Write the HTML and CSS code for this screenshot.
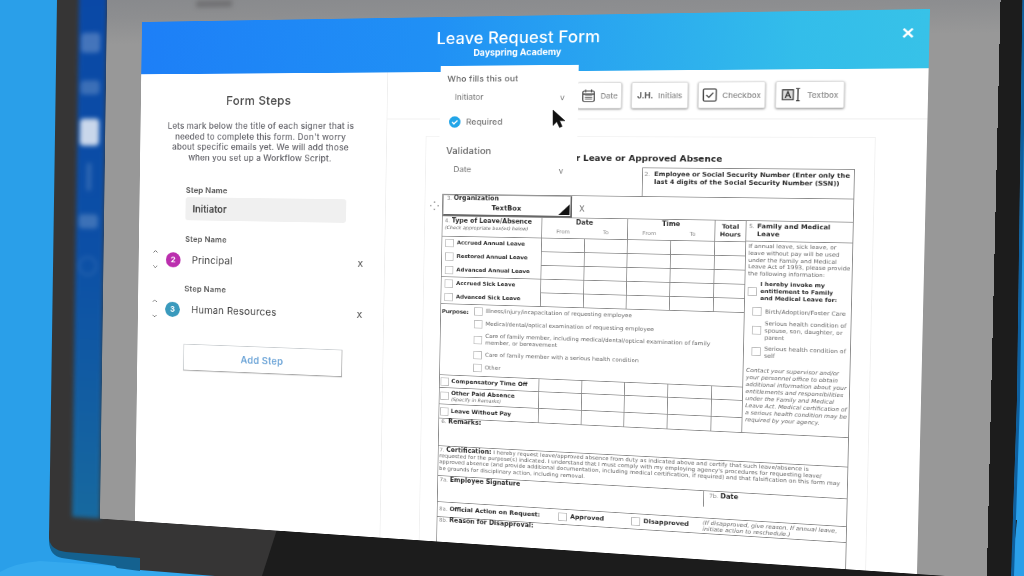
FILE: index.html
```html
<!DOCTYPE html>
<html lang="en">
<head>
<meta charset="utf-8">
<title>Leave Request Form</title>
<link rel="stylesheet" href="styles.css">
</head>
<body>
<div class="stage">
  <svg class="device" viewBox="0 0 1024 576" aria-hidden="true">
    <path class="base" d="M0 576 L0 572 Q15 563 40 561 L115 566 L140 570 L215 576Z"/>
    <path class="edge" d="M49 530 L49 542 Q50 556 62 558 L115 566 L117 568 L140 571 L140 555 L60 550Z"/>
    <path class="lid" d="M57 0 L1022.500 0 L1017 400 L1011 576 L215 576 L140 570 L140 558 L66 552 Q50 550 49 538Z"/>
    <path class="lid-dark" d="M280 520 L1017 520 L1011 576 L262 576Z"/>
    <path class="lid-dark" d="M960 0 L1022.500 0 L1017 400 L1011 576 L940 576Z"/>
    <path class="side" d="M1022.500 0 L1026 0 L1020 400 L1014 576 L1011 576 L1017 400Z"/>
  </svg>

  <div class="screen">
    <nav class="rail">
      <span class="rail-icon rail-square"></span>
      <span class="rail-icon rail-box"></span>
      <span class="rail-icon rail-doc"></span>
      <span class="rail-icon rail-thin"></span>
      <span class="rail-icon rail-box"></span>
      <span class="rail-icon rail-ring"></span>
    </nav>
    <div class="backdrop">
      <div class="ghost-title"></div>
      <section class="modal">
        <header class="modal-head">
          <h1>Leave Request Form</h1>
          <p>Dayspring Academy</p>
          <span class="close">✕</span>
        </header>
        <div class="modal-body">
          <aside class="steps">
            <h2>Form Steps</h2>
            <p class="intro">Lets mark below the title of each signer that is<br>needed to complete this form. Don't worry<br>about specific emails yet. We will add those<br>when you set up a Workflow Script.</p>
            <div class="step step-first">
              <label>Step Name</label>
              <div class="step-input">Initiator</div>
            </div>
            <div class="step">
              <label>Step Name</label>
              <div class="step-row">
                <span class="sorter">
                  <svg viewBox="0 0 8 5"><path d="M1 4l3-3 3 3" fill="none" stroke="#666" stroke-width="1"/></svg>
                  <svg viewBox="0 0 8 5"><path d="M1 1l3 3 3-3" fill="none" stroke="#666" stroke-width="1"/></svg>
                </span>
                <span class="badge badge-pink">2</span>
                <span class="step-name">Principal</span>
                <span class="step-x">x</span>
              </div>
            </div>
            <div class="step">
              <label>Step Name</label>
              <div class="step-row">
                <span class="sorter">
                  <svg viewBox="0 0 8 5"><path d="M1 4l3-3 3 3" fill="none" stroke="#666" stroke-width="1"/></svg>
                  <svg viewBox="0 0 8 5"><path d="M1 1l3 3 3-3" fill="none" stroke="#666" stroke-width="1"/></svg>
                </span>
                <span class="badge badge-teal">3</span>
                <span class="step-name">Human Resources</span>
                <span class="step-x">x</span>
              </div>
            </div>
            <button class="add-step">Add Step</button>
          </aside>

          <main class="editor">
            <div class="toolbar">
              <div class="tool tool-date">
                <svg viewBox="0 0 20 20" class="tool-icon"><rect x="2" y="3.500" width="16" height="15" rx="2" fill="none" stroke="#555" stroke-width="1.600"/><path d="M2 8h16" stroke="#555" stroke-width="2"/><path d="M6 1.500v4M14 1.500v4" stroke="#555" stroke-width="1.600"/><path d="M5 10.500h10M5 13h10M5 15.500h10" stroke="#777" stroke-width="1.400"/></svg>
                <span>Date</span>
              </div>
              <div class="tool tool-initials"><b>J.H.</b><span>Initials</span></div>
              <div class="tool tool-check">
                <svg viewBox="0 0 20 20" class="tool-icon"><rect x="1.500" y="1.500" width="17" height="17" rx="1.500" fill="none" stroke="#444" stroke-width="1.700"/><path d="M5.500 10l3.300 3.200 6-6.500" fill="none" stroke="#444" stroke-width="1.700"/></svg>
                <span>Checkbox</span>
              </div>
              <div class="tool tool-text">
                <svg viewBox="0 0 26 20" class="tool-wide"><rect x="1" y="3" width="14" height="14" fill="#ddd" stroke="#444" stroke-width="1.600"/><path d="M4.500 14.500L8 5.500l3.500 9M5.800 11.500h4.400" fill="none" stroke="#333" stroke-width="1.600"/><path d="M21 1.500v17M18.500 1.500h5M18.500 18.500h5" stroke="#333" stroke-width="1.600" fill="none"/></svg>
                <span>Textbox</span>
              </div>
            </div>

            <div class="doc-area">
              <article class="doc">
                <div class="doc-title">Application for Leave or Approved Absence</div>
                <div class="form">
                  <div class="f-top">
                    <div class="f-box1"></div>
                    <div class="f-box2"><span class="num">2.</span><b>Employee or Social Security Number (Enter only the<br>last 4 digits of the Social Security Number (SSN))</b></div>
                  </div>
                  <div class="f-org">
                    <div class="textbox">
                      <span class="org-label"><span class="num">3.</span> <b>Organization</b></span>
                      <b class="textbox-value">TextBox</b>
                      <span class="corner"></span>
                    </div>
                    <span class="org-x">X</span>
                    <svg class="drag" viewBox="0 0 16 16"><path d="M8 1l1.500 2h-3zM8 15l-1.500-2h3zM1 8l2-1.500v3zM15 8l-2 1.500v-3z" fill="#555"/></svg>
                  </div>
                  <div class="f-mid">
                    <div class="f-main">
                      <div class="th th-type"><span><span class="num">4.</span> <b>Type of Leave/Absence</b></span><em>(Check appropriate box(es) below)</em></div>
                      <div class="th th-span"><b>Date</b><span class="pair"><span>From</span><span>To</span></span></div>
                      <div class="th th-span"><b>Time</b><span class="pair"><span>From</span><span>To</span></span></div>
                      <div class="th th-total"><b>Total<br>Hours</b></div>

                      <div class="leave leave-sep"><i class="box"></i><b>Accrued Annual Leave</b></div>
                      <div class="cell"></div><div class="cell"></div><div class="cell"></div><div class="cell"></div><div class="cell"></div>
                      <div class="leave"><i class="box"></i><b>Restored Annual Leave</b></div>
                      <div class="cell"></div><div class="cell"></div><div class="cell"></div><div class="cell"></div><div class="cell"></div>
                      <div class="leave"><i class="box"></i><b>Advanced Annual Leave</b></div>
                      <div class="cell"></div><div class="cell"></div><div class="cell"></div><div class="cell"></div><div class="cell"></div>
                      <div class="leave leave-sep"><i class="box"></i><b>Accrued Sick Leave</b></div>
                      <div class="cell"></div><div class="cell"></div><div class="cell"></div><div class="cell"></div><div class="cell"></div>
                      <div class="leave"><i class="box"></i><b>Advanced Sick Leave</b></div>
                      <div class="cell"></div><div class="cell"></div><div class="cell"></div><div class="cell"></div><div class="cell"></div>

                      <div class="purpose">
                        <b class="purpose-label">Purpose:</b>
                        <ul>
                          <li><i class="box"></i><span>Illness/injury/incapacitation of requesting employee</span></li>
                          <li><i class="box"></i><span>Medical/dental/optical examination of requesting employee</span></li>
                          <li class="li-tall"><i class="box"></i><span>Care of family member, including medical/dental/optical examination of family<br>member, or bereavement</span></li>
                          <li><i class="box"></i><span>Care of family member with a serious health condition</span></li>
                          <li><i class="box"></i><span>Other</span></li>
                        </ul>
                      </div>

                      <div class="leave leave-sep row-low"><i class="box"></i><b>Compensatory Time Off</b></div>
                      <div class="cell"></div><div class="cell"></div><div class="cell"></div><div class="cell"></div><div class="cell"></div>
                      <div class="leave leave-sep row-low"><i class="box"></i><span class="two"><b>Other Paid Absence</b><em>(Specify in Remarks)</em></span></div>
                      <div class="cell"></div><div class="cell"></div><div class="cell"></div><div class="cell"></div><div class="cell"></div>
                      <div class="leave leave-sep row-low"><i class="box"></i><b>Leave Without Pay</b></div>
                      <div class="cell"></div><div class="cell"></div><div class="cell"></div><div class="cell"></div><div class="cell"></div>
                    </div>
                    <div class="f-family">
                      <div class="fam-head"><span class="num">5.</span> <b>Family and Medical<br>Leave</b></div>
                      <div class="fam-body">
                        <p>If annual leave, sick leave, or<br>leave without pay will be used<br>under the Family and Medical<br>Leave Act of 1993, please provide<br>the following information:</p>
                        <div class="fam-opt fam-strong"><i class="box"></i><b>I hereby invoke my<br>entitlement to Family<br>and Medical Leave for:</b></div>
                        <div class="fam-opt"><i class="box"></i><span>Birth/Adoption/Foster Care</span></div>
                        <div class="fam-opt"><i class="box"></i><span>Serious health condition of<br>spouse, son, daughter, or<br>parent</span></div>
                        <div class="fam-opt"><i class="box"></i><span>Serious health condition of<br>self</span></div>
                        <p class="fam-note">Contact your supervisor and/or<br>your personnel office to obtain<br>additional information about your<br>entitlements and responsibilities<br>under the Family and Medical<br>Leave Act.  Medical certification of<br>a serious health condition may be<br>required by your agency.</p>
                      </div>
                    </div>
                  </div>
                  <div class="f-remarks"><span class="num">6.</span> <b class="big">Remarks:</b></div>
                  <div class="f-cert"><span class="num">7.</span> <b class="big">Certification:</b> I hereby request leave/approved absence from duty as indicated above and certify that such leave/absence is<br>requested for the purpose(s) indicated. I understand that I must comply with my employing agency's procedures for requesting leave/<br>approved absence (and provide additional documentation, including medical certification, if required) and that falsification on this form may<br>be grounds for disciplinary action, including removal.</div>
                  <div class="f-sign">
                    <div class="sign-a"><span class="num">7a.</span> <b class="big">Employee Signature</b></div>
                    <div class="sign-b"><span class="num">7b.</span> <b class="big">Date</b></div>
                  </div>
                  <div class="f-action">
                    <span class="act-a"><span class="num">8a.</span> <b>Official Action on Request:</b></span>
                    <span class="act-b"><i class="box"></i><b>Approved</b></span>
                    <span class="act-c"><i class="box"></i><b>Disapproved</b></span>
                    <em class="act-d">(If disapproved, give reason. If annual leave,<br>initiate action to reschedule.)</em>
                  </div>
                  <div class="f-reason"><span class="num">8b.</span> <b>Reason for Disapproval:</b></div>
                </div>
              </article>
            </div>
          </main>
        </div>

        <div class="popup">
          <div class="pop-label">Who fills this out</div>
          <div class="pop-select pop-first"><span>Initiator</span><span class="caret">v</span></div>
          <div class="pop-required">
            <svg viewBox="0 0 16 16" class="pop-check"><circle cx="8" cy="8" r="8" fill="#22a5e8"/><path d="M4.300 8.200l2.600 2.500 4.800-5" fill="none" stroke="#fff" stroke-width="1.800"/></svg>
            <span>Required</span>
          </div>
          <div class="pop-label pop-validation">Validation</div>
          <div class="pop-select pop-date"><span>Date</span><span class="caret">v</span></div>
        </div>
      </section>
    </div>
  </div>

  <svg class="cursor" viewBox="0 0 14 20" aria-hidden="true"><path d="M1 1 L1 16.500 L4.800 12.800 L7.500 18.600 L10.200 17.400 L7.700 11.800 L13 11.800Z" fill="#111" stroke="#222" stroke-width=".5"/></svg>
</div>
</body>
</html>
```
FILE: styles.css
```css
* { box-sizing: border-box; }
html, body { margin: 0; padding: 0; height: 100%; overflow: hidden; }
body { background: #2a9fe9; font-family: "Inter", "Liberation Sans", sans-serif; }
.stage { position: relative; width: 1024px; height: 576px; overflow: hidden; }

.device { position: absolute; inset: 0; width: 1024px; height: 576px; }
.base { fill: #35a9ee; }
.edge { fill: #14618f; }
.lid { fill: #363535; }
.lid-dark { fill: #1c1c1c; }
.side { fill: #0e5f9e; }

.cursor { position: absolute; left: 552px; top: 109px; width: 14px; height: 20px; filter: blur(.4px); }

/* the flat page, projected on to the laptop's screen */
.screen {
  position: absolute; left: 0; top: 0;
  width: 1170px; height: 760px;
  display: flex;
  transform-origin: 0 0;
  transform: matrix3d(0.678864,-0.014056,0,-0.000117351, -0.008896,0.717116,0,0.00000817, 0,0,1,0, 142,22,0,1) translate(-92px,-60px);
}

.rail {
  width: 41px; flex: none;
  background: linear-gradient(180deg, #0a48a6 0%, #0c4fa6 50%, #17699f 100%);
  display: grid; grid-auto-rows: 63px; align-items: center; justify-items: center;
  padding: 56px 5px 0 0;
  filter: blur(3px);
}
.rail-icon { display: block; width: 28px; height: 28px; background: rgba(255,255,255,.24); border-radius: 5px; }
.rail-box { height: 20px; background: rgba(255,255,255,.2); }
.rail-doc { width: 28px; height: 38px; background: rgba(255,255,255,.78); }
.rail-thin { width: 8px; height: 40px; background: rgba(255,255,255,.13); }
.rail-ring { border-radius: 50%; background: none; border: 3px solid rgba(255,255,255,.1); }

.backdrop {
  position: relative; flex: 1;
  padding: 60px 78px 0 51px;
  background: linear-gradient(180deg, #838589 0%, #8d8e90 7%, #989898 12%, #989898 100%);
}
.ghost-title { position: absolute; left: 128px; top: 32px; width: 50px; height: 9px; background: #707072; filter: blur(3px); }

.modal { position: relative; width: 1000px; height: 700px; background: #fff; overflow: hidden; }
.modal-head {
  position: relative; height: 73px; color: #fff; text-align: center;
  background: linear-gradient(90deg, #1d7ff7 0%, #2090f5 40%, #33bdea 85%, #37c2e8 100%);
  display: flex; flex-direction: column; justify-content: center; padding: 0 0 4px 16px;
}
.modal-head h1 { margin: 0; font-size: 21px; line-height: 27px; font-weight: 500; letter-spacing: .2px; }
.modal-head p { margin: 0; font-size: 11.300px; line-height: 13px; font-weight: 700; }
.close { position: absolute; right: 16px; top: 19px; font-size: 19px; line-height: 22px; font-weight: 700; }

.modal-body { display: flex; height: 627px; }

.steps { width: 341px; flex: none; border-right: 1px solid #eeeeee; padding-top: 26px; color: #444; }
.steps h2 { margin: 0; padding-right: 8px; text-align: center; font-size: 16px; line-height: 22px; font-weight: 500; letter-spacing: .3px; color: #4a4a4a; }
.intro { margin: 17px 0 0; padding-right: 4px; text-align: center; font-size: 11.300px; line-height: 14.600px; color: #66666c; letter-spacing: .2px; font-weight: 500; }
.step { margin-top: 17px; padding-left: 66px; padding-right: 24px; }
.step-first { margin-top: 32px; padding-bottom: 3px; }
.step label { display: block; font-size: 10.800px; line-height: 14px; font-weight: 600; color: #555; letter-spacing: .2px; }
.step-input { margin-top: 2px; width: 222px; height: 32px; background: #f0f0f0; border-radius: 4px; padding-left: 10px; font-size: 13px; line-height: 32px; font-weight: 600; color: #444; }
.step-row { position: relative; display: flex; align-items: center; height: 34px; margin-top: 4px; }
.sorter { position: absolute; left: -46px; top: 4px; width: 8px; height: 26px; display: flex; flex-direction: column; justify-content: space-between; }
.sorter svg { display: block; width: 8px; height: 5px; }
.badge { position: absolute; left: -27px; top: 7px; width: 21px; height: 21px; border-radius: 50%; color: #fff; font-size: 11px; line-height: 21px; text-align: center; font-weight: 700; }
.badge-pink { background: #bb2fae; }
.badge-teal { background: #3a9abd; }
.step-name { font-size: 13.500px; color: #444; margin-left: 10px; letter-spacing: .2px; }
.step-x { position: absolute; right: 4px; top: 9px; font-size: 14px; line-height: 14px; color: #555; }
.add-step { display: block; margin: 31px 0 0 66px; width: 220px; height: 37px; background: #fff; border: 1px solid #c9cdd0; border-bottom-color: #aaa; border-right-color: #aaa; color: #6fa6d8; font: 600 13px/35px "Inter", sans-serif; letter-spacing: .2px; box-shadow: 0 1px 1px rgba(0,0,0,.12); }

.editor { flex: 1; min-width: 0; }
.toolbar { height: 63px; padding: 15px 0 0 244px; display: flex; gap: 12px; border-bottom: 1px solid #e9e9e9; }
.tool { height: 34px; display: flex; align-items: center; justify-content: center; gap: 6px; background: #fff; border: 1px solid #dcdcdc; border-radius: 2px; box-shadow: 0 1px 3px rgba(0,0,0,.45); color: #8a8a8a; font-size: 9.500px; font-weight: 500; filter: blur(.35px); }
.tool b { color: #444; font-size: 10px; }
.tool-date { width: 55px; }
.tool-initials { width: 69px; }
.tool-check, .tool-text { width: 80px; }
.tool-icon { width: 18px; height: 18px; flex: none; }
.tool-wide { width: 24px; height: 18px; flex: none; }

.doc-area { padding: 22px 58px 0 51px; }
.doc { position: relative; height: 620px; border: 1px solid #f0f0f0; padding: 0 22px; filter: blur(.45px); }

.doc-title { height: 39px; padding: 21px 0 0 85px; font: 700 10.800px/14px "DejaVu Sans", sans-serif; color: #2b2b2b; }
.form { position: relative; width: 504px; font: 7.100px/8.600px "DejaVu Sans", sans-serif; color: #666; }
.form b { color: #2c2c2c; font-size: 7.400px; }
.form b.big { font-size: 8px; }
.num { color: #888; }
.box { display: inline-block; width: 11px; height: 11px; border: 1px solid #bdbdbd; flex: none; background: #fff; }

.f-top { display: flex; height: 37px; }
.f-box1 { width: 252px; }
.f-box2 { flex: 1; display: flex; gap: 5px; border: 1px solid #8a8a8a; border-bottom: 0; padding: 3px 2px; line-height: 9.500px; white-space: nowrap; }
.f-box2 b { font-size: 7.900px; }
.f-org { position: relative; display: flex; align-items: center; height: 30px; border: 1px solid #8a8a8a; }
.textbox { position: relative; width: 165px; height: 28px; background: #fff; border: 1px solid #aaa; border-right: 2px solid #666; border-bottom: 2px solid #666; }
.org-label { position: absolute; left: 4px; top: 0; }
.org-label b { font-size: 8px !important; }
.textbox-value { position: absolute; left: 0; right: 0; top: 11px; text-align: center; font-size: 8.500px !important; line-height: 11px; }
.corner { position: absolute; right: 1px; bottom: 1px; width: 0; height: 0; border-style: solid; border-width: 0 0 14px 14px; border-color: transparent transparent #111 transparent; }
.org-x { margin: 4px 0 0 9px; font-size: 10px; color: #666; font-family: "Inter", sans-serif; }
.drag { position: absolute; left: -18px; top: 8px; width: 14px; height: 14px; }

.f-mid { display: flex; height: 270px; border: 1px solid #8a8a8a; border-top: 0; }
.f-main { width: 377px; flex: none; display: grid; grid-template-columns: 127px 54px 53px 53px 53px 37px; grid-template-rows: 26px repeat(5, 18px) 95px 17px 22px 20px; }
.th { border-left: 1px solid #8a8a8a; text-align: center; }
.th-type { border-left: 0; text-align: left; padding: 2px 0 0 3px; display: flex; flex-direction: column; white-space: nowrap; overflow: hidden; }
.th-type b { font-size: 8px !important; }
.th-type em { font-size: 6.200px; line-height: 8px; }
.th-span { grid-column: span 2; padding-top: 1px; display: flex; flex-direction: column; }
.th-span b { font-size: 8px !important; line-height: 10px; }
.pair { display: grid; grid-template-columns: 1fr 1fr; margin-top: 3px; font-size: 6.800px; color: #888; }
.th-total { padding-top: 3px; line-height: 9.500px; }
.th-total b { font-size: 7.500px !important; }
.leave { display: flex; align-items: center; gap: 4px; padding-left: 4px; border-top: 1px solid transparent; }
.leave-sep { border-top-color: #8a8a8a; }
.leave b { white-space: nowrap; font-size: 7px; }
.cell { border-left: 1px solid #8a8a8a; border-top: 1px solid #8a8a8a; }
.two { display: flex; flex-direction: column; }
.two em { font-size: 6.200px; line-height: 7px; }
.purpose { grid-column: 1 / -1; border-top: 1px solid #8a8a8a; display: flex; padding: 0 0 0 1px; }
.purpose-label { width: 42px; flex: none; padding-top: 6px; font-size: 7px !important; }
.purpose ul { margin: 0; padding: 0; list-style: none; }
.purpose li { display: flex; align-items: center; gap: 4px; height: 17px; white-space: nowrap; }
.purpose .li-tall { height: 24px; }
.row-low { padding-left: 1px; gap: 3px; }
.row-low b { font-size: 7.400px !important; }
.f-family { flex: 1; border-left: 1px solid #8a8a8a; }
.fam-head { height: 26px; padding: 2px 3px 0 3px; display: flex; gap: 3px; line-height: 9.500px; border-bottom: 1px solid #8a8a8a; }
.fam-head b { font-size: 7.900px !important; }
.fam-body { padding: 2px 3px; }
.fam-body p { margin: 0; font-size: 7px; line-height: 8.800px; white-space: nowrap; }
.fam-opt { display: flex; align-items: center; gap: 4px; margin: 5px 0 0 6px; white-space: nowrap; line-height: 9px; }
.fam-strong { margin: 4px 0 0 0; }
.fam-strong b { font-size: 7px !important; line-height: 9.200px; }
.fam-body .fam-note { margin-top: 11px; font-style: italic; line-height: 9px; }

.f-remarks { height: 37px; border: 1px solid #8a8a8a; border-top: 0; padding: 0 0 0 3px; }
.f-cert { height: 40px; border: 1px solid #8a8a8a; border-top: 0; padding: 1px 0 0 1px; line-height: 8.200px; font-size: 7px; white-space: nowrap; overflow: hidden; }
.f-sign { display: flex; height: 35px; border: 1px solid #8a8a8a; border-top: 0; }
.sign-a { width: 334px; height: 20px; padding: 1px 0 0 2px; border-right: 1px solid #8a8a8a; }
.sign-b { padding: 2px 0 0 6px; }
.f-action { display: flex; align-items: center; height: 20px; border: 1px solid #8a8a8a; border-top: 0; padding-left: 2px; white-space: nowrap; }
.f-action b { font-size: 7.800px !important; }
.act-a { width: 153px; }
.act-b, .act-c { display: flex; align-items: center; gap: 4px; }
.act-b { width: 91px; }
.act-c { width: 87px; }
.act-d { line-height: 8px; }
.f-reason { height: 60px; border: 1px solid #8a8a8a; border-top: 0; padding: 0 0 0 2px; }
.f-reason b { font-size: 8px !important; }

.popup { position: absolute; left: 410px; top: 65px; width: 176px; height: 168px; background: #fff; padding: 10px 17px 0 9px; color: #555; z-index: 2; }
.pop-label { font-size: 11px; line-height: 14px; font-weight: 500; color: #666; letter-spacing: .2px; }
.pop-select { display: flex; justify-content: space-between; padding-left: 10px; font-size: 10.500px; line-height: 14px; color: #777; }
.caret { font-size: 10px; }
.pop-first { margin-top: 11px; }
.pop-required { display: flex; align-items: center; gap: 7px; margin-top: 17px; height: 16px; padding-left: 3px; font-size: 11px; font-weight: 500; color: #777; }
.pop-check { width: 15px; height: 15px; flex: none; }
.pop-validation { margin-top: 24px; font-size: 12px; }
.pop-date { margin-top: 11px; }
```
